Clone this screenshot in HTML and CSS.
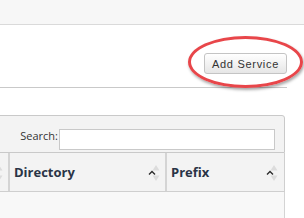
FILE: index.html
```html
<!DOCTYPE html>
<html lang="en">

<head>
    <meta charset="UTF-8">
    <title>Services</title>
    <link rel="stylesheet" href="styles.css">
</head>

<body>
    <div class="topbar"></div>
    <div class="toolbar">
        <button class="btn">Add Service</button>
        <span class="callout"></span>
    </div>
    <div class="grid">
        <div class="filter">
            <label for="search">Search:</label>
            <input id="search" type="text">
        </div>
        <div class="head">
            <div class="col col-first">
                <svg class="sort" width="12" height="18" viewBox="0 0 12 18">
                    <path d="M8 1 L11.5 6.5 L4.5 6.5 Z M4.5 11.5 L11.5 11.5 L8 17 Z" fill="#dcdcdc" />
                </svg>
            </div>
            <div class="col col-dir">Directory
                <svg class="sort" width="12" height="18" viewBox="0 0 12 18">
                    <path d="M8 1 L11.5 6.5 L4.5 6.5 Z M4.5 11.5 L11.5 11.5 L8 17 Z" fill="#dcdcdc" />
                    <path d="M1 10.5 L4 7.5 L7 10.5" fill="none" stroke="#2b2b2b" stroke-width="1.4" />
                </svg>
            </div>
            <div class="col col-prefix">Prefix
                <svg class="sort" width="12" height="18" viewBox="0 0 12 18">
                    <path d="M8 1 L11.5 6.5 L4.5 6.5 Z M4.5 11.5 L11.5 11.5 L8 17 Z" fill="#dcdcdc" />
                    <path d="M1 10.5 L4 7.5 L7 10.5" fill="none" stroke="#2b2b2b" stroke-width="1.4" />
                </svg>
            </div>
        </div>
        <div class="rows"></div>
    </div>
</body>

</html>
```

FILE: styles.css
```css
body {
    margin: 0;
    background: #fff;
    font-family: "Open Sans", "Liberation Sans", sans-serif;
    color: #333;
    overflow: hidden;
}

.topbar {
    height: 24px;
    background: #f7f7f7;
    border-bottom: 1px solid #dadada;
}

.toolbar {
    position: relative;
    width: 287px;
    height: 62px;
    border-bottom: 1px solid #c9c9c9;
    display: flex;
    justify-content: flex-end;
    align-items: flex-start;
}

.btn {
    margin-top: 28px;
    width: 83px;
    height: 21px;
    padding: 0;
    font-family: "Liberation Sans", Arial, sans-serif;
    font-size: 11px;
    letter-spacing: 0.7px;
    color: #333;
    background: linear-gradient(#ffffff, #e6e6e6);
    border: 1px solid #c4c4c4;
    border-radius: 3px;
    cursor: pointer;
}

/* red ring drawn over the button */
.callout {
    position: absolute;
    left: 188px;
    top: 11px;
    width: 109px;
    height: 46px;
    border: 3px solid #e8464a;
    border-radius: 50%;
    box-shadow: 1px 2px 3px rgba(0, 0, 0, 0.35);
}

.grid {
    margin-top: 27px;
    margin-left: -20px;
    width: 305px;
}

.filter {
    height: 36px;
    background: #f3f3f3;
    border: 1px solid #c9c9c9;
    border-radius: 0 3px 0 0;
    display: flex;
    justify-content: flex-end;
    align-items: center;
    padding-right: 9px;
}

.filter label {
    font-size: 11px;
    color: #333;
    margin-top: 3px;
    margin-right: 1px;
}

.filter input {
    width: 216px;
    height: 21px;
    box-sizing: border-box;
    margin-top: 11px;
    border: 1px solid #c9c9c9;
    background: #fff;
    padding: 0 3px;
}

.head {
    display: flex;
    height: 38px;
    width: 304px;
    background: #f3f3f3;
    border-bottom: 1px solid #cfcfcf;
    border-right: 1px solid #cfcfcf;
}

.col {
    position: relative;
    display: flex;
    align-items: center;
    padding-left: 4px;
    font-size: 13px;
    font-weight: bold;
    color: #2a3446;
    border-left: 2px solid #d4d4d4;
}

.col-first {
    width: 24px;
    border-left: none;
}

.col-dir {
    width: 151px;
}

.col-prefix {
    width: 113px;
}

.sort {
    position: absolute;
    right: 5px;
    top: 11px;
}

.col-prefix .sort {
    right: 6px;
}

.rows {
    height: 30px;
    width: 304px;
    background: #f8f8f8;
    border-right: 1px solid #d4d4d4;
}
```
